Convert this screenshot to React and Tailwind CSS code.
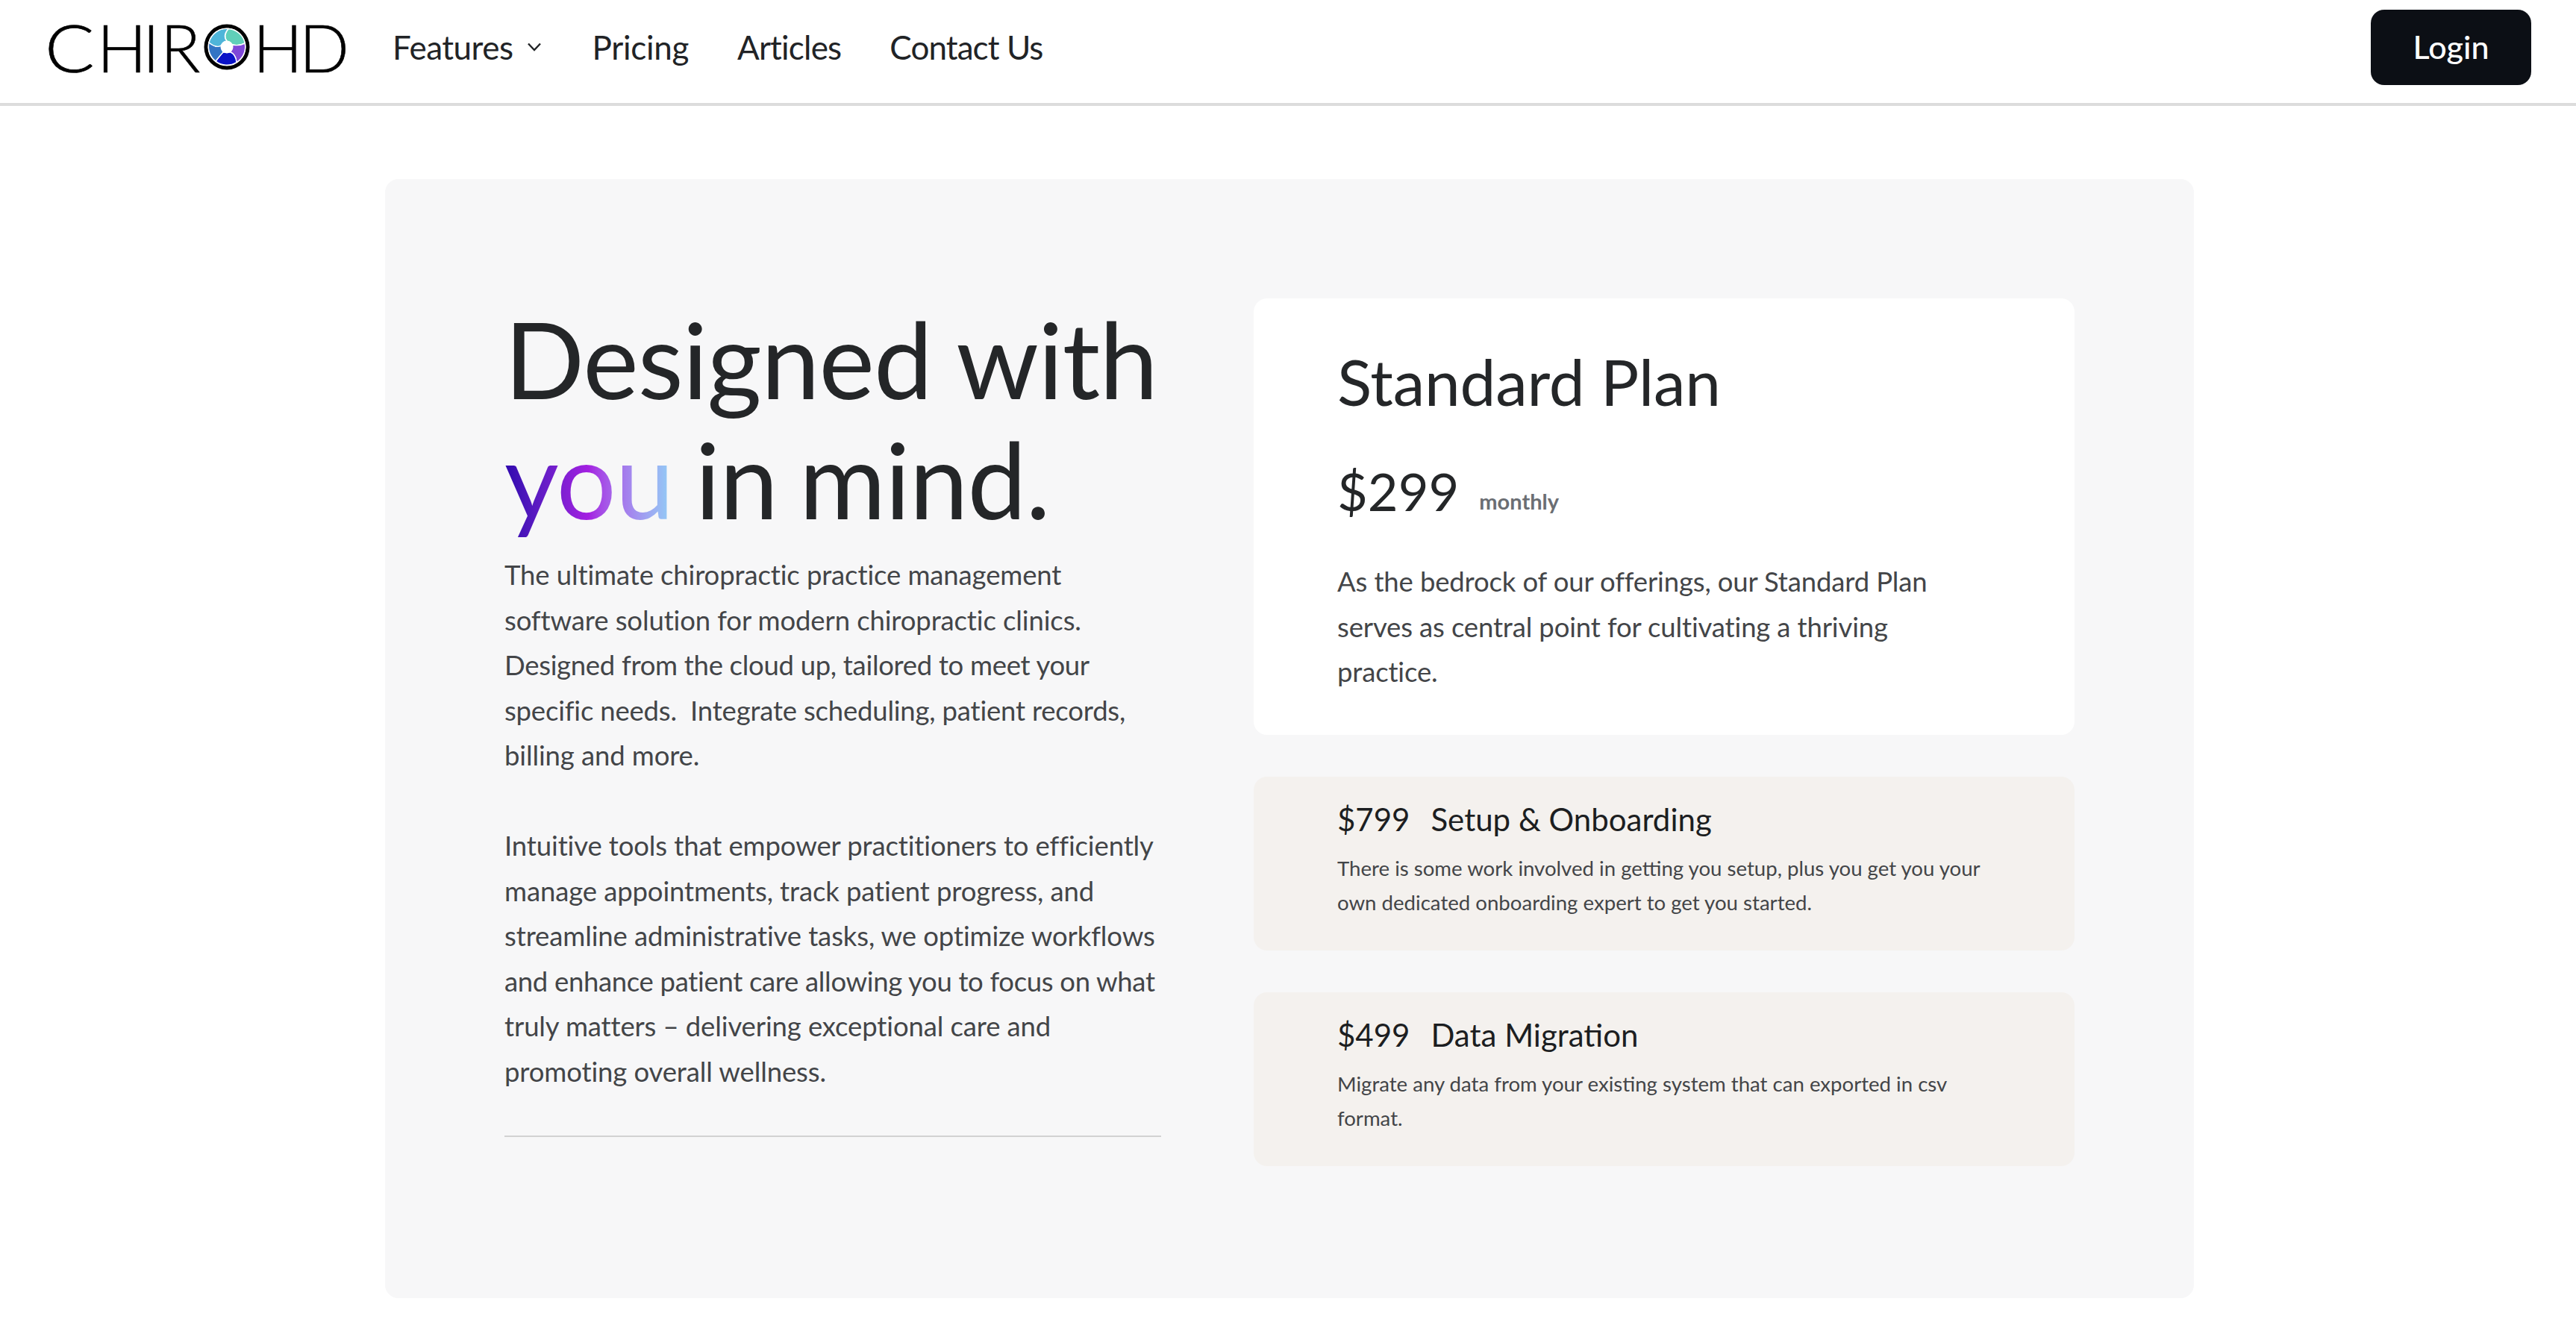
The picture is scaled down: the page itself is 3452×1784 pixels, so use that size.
export default function App() {
  const font = { fontFamily: 'Lato, sans-serif' };
  return (
    <div className="min-h-[1784px] bg-white font-['Lato',sans-serif] text-[#242628]" style={font}>
      <header className="h-[142px] border-b-[4px] border-[#dcdcdc] flex items-center pl-[60px] pr-[60px] pb-[12px]">
        <div className="flex items-center text-[88px] leading-none font-light text-black [-webkit-text-stroke:0.7px_black] w-[402px] h-[64px] whitespace-nowrap">
          <span className="flex">
            <span className="inline-block w-[70px] origin-left scale-x-[1.12]">C</span>
            <span className="inline-block w-[61px]">H</span>
            <span className="inline-block w-[24px]">I</span>
            <span className="inline-block w-[57px]">R</span>
          </span>
          <svg width="64" height="64" viewBox="-32 -32 64 64" className="shrink-0">
            <circle r="28" fill="none" stroke="#000" strokeWidth="5" />
            <g stroke="#fff" strokeWidth="1.4">
              <path d="M0,-8 Q-6,-15 2,-24.5 A24.5,24.5 0 0 1 24.3,-5 Q16,-1 8,-3 Z" fill="#60cfb9" />
              <path d="M8,-3 Q16,-1 24.3,-5 A24.5,24.5 0 0 1 13,20.5 Q12,10 5,7 Z" fill="#7f48d8" />
              <path d="M5,7 Q12,10 13,20.5 A24.5,24.5 0 0 1 -15,19 Q-8,10 -5,7 Z" fill="#0a12c8" />
              <path d="M-5,7 Q-8,10 -15,19 A24.5,24.5 0 0 1 -24,-6 Q-14,2 -8,-2 Z" fill="#3374c4" />
              <path d="M-8,-2 Q-14,2 -24,-6 A24.5,24.5 0 0 1 2,-24.5 Q-6,-15 0,-8 Z" fill="#4fb5d9" />
            </g>
            <circle r="8.5" fill="#fff" />
          </svg>
          <span className="flex ml-[3px]">
            <span className="inline-block w-[62px]">H</span>
            <span className="inline-block">D</span>
          </span>
        </div>
        <nav className="flex items-center ml-[64px] text-[44px] leading-none text-[#212326]">
          <span className="flex items-center tracking-[-0.5px]">
            Features
            <svg width="20" height="12" viewBox="0 0 20 12" className="ml-[18px]" fill="none" stroke="#212326" strokeWidth="2.4">
              <path d="M2 1.5 L10 10 L18 1.5" />
            </svg>
          </span>
          <span className="ml-[68px] tracking-[-0.3px]">Pricing</span>
          <span className="ml-[65px] tracking-[-0.8px]">Articles</span>
          <span className="ml-[65px] tracking-[-0.9px]">Contact Us</span>
        </nav>
        <button className="ml-auto w-[215px] h-[101px] rounded-[18px] bg-[#0c0f15] text-white text-[43px] font-medium">Login</button>
      </header>

      <main className="pt-[98px] pb-[44px]">
        <section className="ml-[516px] w-[2424px] h-[1500px] rounded-[18px] bg-[#f7f7f8] p-[160px] flex gap-[124px]">
          <div className="w-[880px] shrink-0">
            <h1 className="text-[141px] leading-[161px] font-normal text-[#242628] whitespace-nowrap tracking-[-1px]">
              Designed with
              <br />
              <span className="[word-spacing:-6px]">
                <span className="bg-clip-text text-transparent bg-gradient-to-r from-[#2f06ae] via-[#a41fe2] to-[#8fd0f6]">you</span> in mind.
              </span>
            </h1>
            <div className="text-[36.5px] leading-[60.5px] text-[#434548] mt-[18px] whitespace-nowrap tracking-[-0.12px]">
              <p>
                The ultimate chiropractic practice management
                <br />software solution for modern chiropractic clinics.
                <br /><span className="tracking-[-0.31px]">Designed from the cloud up, tailored to meet your</span>
                <br /><span className="tracking-[-0.2px]">specific needs.&nbsp; Integrate scheduling, patient records,</span>
                <br />billing and more.
              </p>
              <p className="mt-[60.5px]">
                Intuitive tools that empower practitioners to efficiently
                <br />manage appointments, track patient progress, and
                <br />streamline administrative tasks, we optimize workflows
                <br /><span className="tracking-[-0.33px]">and enhance patient care allowing you to focus on what</span>
                <br />truly matters – delivering exceptional care and
                <br />promoting overall wellness.
              </p>
            </div>
            <hr className="mt-[56px] border-t-[2px] border-[#d2d2d2]" />
          </div>

          <div className="w-[1100px] flex flex-col gap-[56px]">
            <div className="h-[585px] rounded-[18px] bg-white pl-[112px] pr-[180px] pt-[56px]">
              <h2 className="text-[85.5px] leading-[110px] text-[#242628] tracking-[-0.2px]">Standard Plan</h2>
              <div className="flex items-baseline mt-[48px]">
                <span className="text-[70.4px] leading-[88px]">$299</span>
                <span className="ml-[27px] text-[29px] font-bold text-[#6b6e73] -translate-y-[2px]">monthly</span>
              </div>
              <p className="mt-[47px] text-[36.5px] leading-[60.5px] text-[#434548] tracking-[-0.15px]">
                As the bedrock of our offerings, our Standard Plan
                <br />serves as central point for cultivating a thriving
                <br />practice.
              </p>
            </div>
            <div className="h-[233px] rounded-[18px] bg-[#f4f1ee] pl-[112px] pr-[120px] pt-[30px]">
              <div className="text-[42px] leading-[55px] text-[#1c1e21] flex gap-[28px]"><span>$799</span><span>Setup &amp; Onboarding</span></div>
              <p className="mt-[15px] text-[27.6px] leading-[45.5px] text-[#434548]">
                There is some work involved in getting you setup, plus you get you your
                <br />own dedicated onboarding expert to get you started.
              </p>
            </div>
            <div className="h-[233px] rounded-[18px] bg-[#f4f1ee] pl-[112px] pr-[120px] pt-[30px]">
              <div className="text-[42px] leading-[55px] text-[#1c1e21] flex gap-[28px]"><span>$499</span><span>Data Migration</span></div>
              <p className="mt-[15px] text-[27.6px] leading-[45.5px] text-[#434548]">
                Migrate any data from your existing system that can exported in csv
                <br />format.
              </p>
            </div>
          </div>
        </section>
      </main>
    </div>
  );
}
